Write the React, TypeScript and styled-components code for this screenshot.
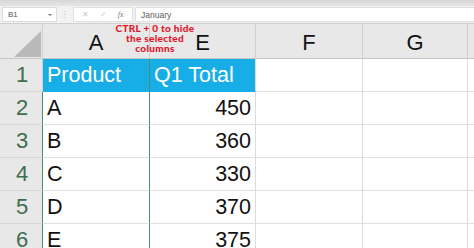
import React from "react";
import styled, { createGlobalStyle } from "styled-components";

const Global = createGlobalStyle`
  html, body { margin: 0; padding: 0; background: #ffffff; }
  body { font-family: "Liberation Sans", Arial, sans-serif; }
`;

const Page = styled.div`
  width: 474px;
  height: 248px;
  overflow: hidden;
  position: relative;
  background: #ffffff;
  display: flex;
  flex-direction: column;
  & > * { flex-shrink: 0; }
`;

const TopStrip = styled.div`
  height: 5px;
  background: linear-gradient(#d6d6d6, #e4e4e4);
  border-bottom: 1px solid #e2e2e2;
`;

const FormulaBar = styled.div`
  height: 15px;
  padding: 1px 0 1px 2px;
  background: #f2f2f2;
  display: flex;
  align-items: stretch;
`;

const NameBox = styled.div`
  width: 55px;
  box-sizing: border-box;
  background: #fff;
  border: 1px solid #dcdcdc;
  display: flex;
  align-items: center;
  justify-content: space-between;
  padding: 0 4px 0 5px;
  font-size: 8px;
  color: #555;
`;

const Caret = styled.span`
  width: 0;
  height: 0;
  border-left: 2px solid transparent;
  border-right: 2px solid transparent;
  border-top: 2px solid #777;
`;

const Dots = styled.div`
  width: 15px;
  display: flex;
  align-items: center;
  justify-content: center;
  color: #c4c4c4;
  font-size: 9px;
`;

const IconBox = styled.div`
  width: 60px;
  box-sizing: border-box;
  background: #fff;
  border: 1px solid #e0e0e0;
  display: flex;
  align-items: center;
  justify-content: space-around;
  padding: 0 3px;
  color: #c9c9c9;
  font-size: 8px;
  margin-left: 1px;
`;

const Fx = styled.span`
  font-family: "Liberation Serif", serif;
  font-style: italic;
  color: #777;
  font-size: 8px;
`;

const FormulaInput = styled.div`
  flex: 1;
  margin-left: 2px;
  box-sizing: border-box;
  background: #fff;
  border: 1px solid #e0e0e0;
  border-right: none;
  display: flex;
  align-items: center;
  padding-left: 5px;
  font-size: 8.5px;
  color: #606060;
`;

const Sheet = styled.div`
  display: grid;
  grid-template-columns: 43px 107px 106px 107px 105px 1fr;
  grid-template-rows: 35px repeat(6, 33px);
  border-top: 1px solid #d0d0d0;
`;

const Corner = styled.div`
  background: #e8e8e8;
  border-right: 1px solid #d0d0d0;
  border-bottom: 1px solid #c6c6c6;
  display: flex;
  align-items: flex-end;
  justify-content: flex-end;
  padding: 0 1px 1px 0;
`;

const Triangle = styled.div`
  width: 0;
  height: 0;
  border-left: 27px solid transparent;
  border-bottom: 26px solid #b9b9b9;
`;

const ColHeader = styled.div`
  background: #e8e8e8;
  border-right: 1px solid #d0d0d0;
  border-bottom: 1px solid #c6c6c6;
  display: flex;
  align-items: center;
  justify-content: center;
  font-size: 22px;
  color: #111;
  padding-top: 4px;
  box-sizing: border-box;
`;

const RowHeader = styled.div<{ $green?: boolean }>`
  background: #e8e8e8;
  border-right: 1px solid ${(p) => (p.$green ? "#4d8c72" : "#d0d0d0")};
  border-bottom: 1px solid #d6d6d6;
  display: flex;
  align-items: center;
  justify-content: center;
  font-size: 22px;
  color: #3d6e50;
  padding-left: 2px;
`;

const Cell = styled.div<{ $head?: boolean; $right?: boolean; $sel?: boolean }>`
  background: ${(p) => (p.$head ? "#17ade6" : "#ffffff")};
  color: ${(p) => (p.$head ? "#ffffff" : "#111111")};
  border-right: 1px solid ${(p) => (p.$sel ? "#4d8c72" : "#dcdcdc")};
  border-bottom: 1px solid ${(p) => (p.$head ? "#17ade6" : "#e0e0e0")};
  display: flex;
  align-items: center;
  justify-content: ${(p) => (p.$right ? "flex-end" : "flex-start")};
  padding: 0 4px 0 4px;
  font-size: 21.5px;
  white-space: nowrap;
  overflow: hidden;
`;

const Note = styled.div`
  position: absolute;
  left: 105px;
  top: 23px;
  width: 100px;
  text-align: center;
  white-space: nowrap;
  font-family: Lato, "Liberation Sans", sans-serif;
  font-weight: 900;
  font-size: 10px;
  line-height: 10.2px;
  letter-spacing: 0.3px;
  color: #e3152b;
`;

const rows: [string, string][] = [
  ["A", "450"],
  ["B", "360"],
  ["C", "330"],
  ["D", "370"],
  ["E", "375"],
];

export default function App() {
  return (
    <Page>
      <Global />
      <TopStrip />
      <FormulaBar>
        <NameBox>
          B1
          <Caret />
        </NameBox>
        <Dots>⋮</Dots>
        <IconBox>
          <span>✕</span>
          <span>✓</span>
          <Fx>fx</Fx>
        </IconBox>
        <FormulaInput>January</FormulaInput>
      </FormulaBar>
      <Sheet>
        <Corner>
          <Triangle />
        </Corner>
        <ColHeader>A</ColHeader>
        <ColHeader>E</ColHeader>
        <ColHeader>F</ColHeader>
        <ColHeader>G</ColHeader>
        <ColHeader />

        <RowHeader>1</RowHeader>
        <Cell $head $sel>Product</Cell>
        <Cell $head>Q1 Total</Cell>
        <Cell />
        <Cell />
        <Cell />

        {rows.map(([p, v], i) => (
          <React.Fragment key={p}>
            <RowHeader $green>{i + 2}</RowHeader>
            <Cell $sel>{p}</Cell>
            <Cell $right>{v}</Cell>
            <Cell />
            <Cell />
            <Cell />
          </React.Fragment>
        ))}
      </Sheet>
      <Note>
        CTRL + 0 to hide
        <br />
        the selected
        <br />
        columns
      </Note>
    </Page>
  );
}
